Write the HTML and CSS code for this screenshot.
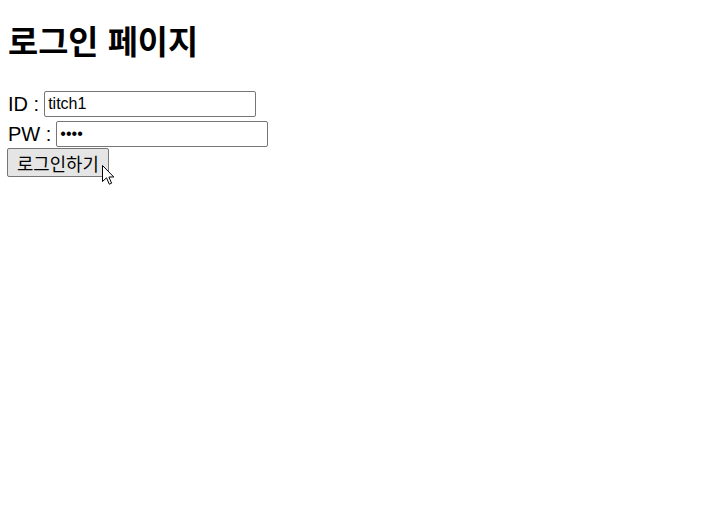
FILE: index.html
```html
<!DOCTYPE html>
<html lang="ko">
<head>
<meta charset="utf-8">
<title>로그인 페이지</title>
<link rel="stylesheet" href="styles.css">
</head>
<body>
<h1 class="title">로그인 페이지</h1>
<form class="login">
  <div class="row"><span class="label">ID :</span><input class="field field-id" type="text" value="titch1"></div>
  <div class="row"><span class="label">PW :</span><input class="field field-pw" type="password" value="1234"></div>
  <div class="row row-btn">
    <button class="btn" type="button">로그인하기</button>
    <svg class="cursor" width="14" height="21" viewBox="0 0 14 21" aria-hidden="true">
      <path d="M0.5 0.5 L0.5 16.5 L4.5 12.8 L7.3 19.2 L9.6 18.2 L6.9 12 L11.8 12 Z" fill="#fff" stroke="#000" stroke-width="1" stroke-linejoin="miter"/>
    </svg>
  </div>
</form>
</body>
</html>
```

FILE: styles.css
```css
html, body {
  margin: 0;
  background: #fff;
}
body {
  padding: 8px;
  font-family: "Liberation Sans", "Noto Sans CJK KR", sans-serif;
  color: #000;
}
.title {
  margin: 17px 0 0;
  font-family: "Liberation Sans", "Noto Sans CJK KR", sans-serif;
  font-size: 32.8px;
  line-height: 36px;
  font-weight: bold;
}
.login {
  margin-top: 30px;
}
.row {
  display: flex;
  align-items: center;
  height: 26px;
  font-size: 20px;
  line-height: 23px;
}
.row + .row {
  margin-top: 4px;
}
.label {
  margin-right: 5px;
}
.field {
  box-sizing: border-box;
  width: 212px;
  height: 26px;
  margin: 0;
  padding: 3px 3px;
  border: 1px solid #767676;
  border-radius: 2px;
  font-family: "Liberation Sans", sans-serif;
  font-size: 16px;
  color: #000;
  background: #fff;
  outline: none;
}
.row-btn {
  position: relative;
  height: 29px;
}
.row + .row-btn {
  margin-top: 1px;
}
.btn {
  box-sizing: border-box;
  height: 29px;
  margin: 0 0 0 -1px;
  padding: 0 9px;
  border: 1px solid #767676;
  border-radius: 2px;
  background: #e5e5e5;
  font-family: "Noto Sans CJK KR", sans-serif;
  font-size: 17.8px;
  color: #000;
}
.cursor {
  position: absolute;
  left: 94px;
  top: 17px;
}
```
